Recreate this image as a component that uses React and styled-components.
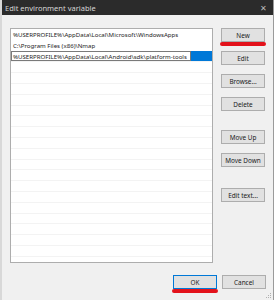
import React from "react";
import styled, { createGlobalStyle, css } from "styled-components";

const GlobalStyle = createGlobalStyle`
  html, body { margin: 0; padding: 0; background: #f0f0f0; }
  * { box-sizing: border-box; }
`;

const paths = [
  "%USERPROFILE%\\AppData\\Local\\Microsoft\\WindowsApps",
  "C:\\Program Files (x86)\\Nmap",
];
const editing = "%USERPROFILE%\\AppData\\Local\\Android\\sdk\\platform-tools";

const Window = styled.div`
  width: 274px;
  height: 300px;
  background: #f0f0f0;
  border-left: 2px solid #d8d8d8;
  border-right: 1px solid #9a9a9a;
  display: flex;
  flex-direction: column;
  font-family: "Noto Sans", "Open Sans", sans-serif;
  position: relative;
  overflow: hidden;
`;

const TitleBar = styled.div`
  height: 15px;
  background: #2b2b2b;
  color: #d6d6d6;
  font-size: 7.5px;
  display: flex;
  align-items: center;
  justify-content: space-between;
  padding: 0 6px 0 3px;
`;

const Close = styled.span`
  font-size: 8px;
  color: #bbbbbb;
`;

const Main = styled.div`
  display: flex;
  gap: 8px;
  padding: 13px 0 0 8px;
`;

const ListBox = styled.div`
  width: 203px;
  height: 235px;
  background: #ffffff;
  border: 1px solid #adadad;
  overflow: hidden;
`;

const Row = styled.div`
  height: 10.8px;
  display: flex;
  align-items: center;
  font-size: 6.1px;
  color: #1a1a1a;
  padding-left: 2px;
  white-space: nowrap;
  background: #ffffff;
  border-top: ${(p) => (p.$lined ? "1px solid #f3f3f3" : "none")};
`;

const EditRow = styled.div`
  height: 10.8px;
  display: flex;
  background: #ffffff;
`;

const EditField = styled.div`
  width: 180px;
  border: 1px solid #7a7a7a;
  font-size: 6.1px;
  color: #1a1a1a;
  display: flex;
  align-items: center;
  padding-left: 1px;
  white-space: nowrap;
  overflow: hidden;
`;

const Selection = styled.div`
  flex: 1;
  background: #0078d7;
`;

const ButtonColumn = styled.div`
  width: 44px;
  display: flex;
  flex-direction: column;
`;

const Button = styled.div`
  width: 44px;
  height: 14px;
  background: #e1e1e1;
  border: 1px solid ${(p) => (p.$default ? "#0078d7" : "#adadad")};
  font-size: 6.4px;
  color: #1a1a1a;
  display: flex;
  align-items: center;
  justify-content: center;
  position: relative;
  margin-top: ${(p) => p.$gap || 0}px;
  flex-shrink: 0;
  ${(p) =>
    p.$marked &&
    css`
      &::after {
        content: "";
        position: absolute;
        left: -2px;
        right: -2px;
        bottom: -5px;
        height: 4px;
        border-radius: 2px;
        background: #e3121b;
      }
    `}
`;

const Footer = styled.div`
  display: flex;
  justify-content: flex-end;
  gap: 5px;
  padding: 12px 7px 0 0;
`;

const Grip = styled.svg`
  position: absolute;
  right: 1px;
  bottom: 1px;
`;

export default function App() {
  const emptyRows = Array.from({ length: 19 });
  return (
    <>
      <GlobalStyle />
      <Window>
        <TitleBar>
          <span>Edit environment variable</span>
          <Close>✕</Close>
        </TitleBar>
        <Main>
          <ListBox>
            {paths.map((p) => (
              <Row key={p}>{p}</Row>
            ))}
            <EditRow>
              <EditField>{editing}</EditField>
              <Selection />
            </EditRow>
            {emptyRows.map((_, i) => (
              <Row key={i} $lined />
            ))}
          </ListBox>
          <ButtonColumn>
            <Button $marked>New</Button>
            <Button $gap={9}>Edit</Button>
            <Button $gap={9}>Browse...</Button>
            <Button $gap={9}>Delete</Button>
            <Button $gap={19}>Move Up</Button>
            <Button $gap={9}>Move Down</Button>
            <Button $gap={21}>Edit text...</Button>
          </ButtonColumn>
        </Main>
        <Footer>
          <Button $default $marked>OK</Button>
          <Button>Cancel</Button>
        </Footer>
        <Grip width="6" height="6" viewBox="0 0 6 6">
          <rect x="4" y="0" width="1" height="1" fill="#b0b0b0" />
          <rect x="2" y="2" width="1" height="1" fill="#b0b0b0" />
          <rect x="4" y="2" width="1" height="1" fill="#b0b0b0" />
          <rect x="0" y="4" width="1" height="1" fill="#b0b0b0" />
          <rect x="2" y="4" width="1" height="1" fill="#b0b0b0" />
          <rect x="4" y="4" width="1" height="1" fill="#b0b0b0" />
        </Grip>
      </Window>
    </>
  );
}
